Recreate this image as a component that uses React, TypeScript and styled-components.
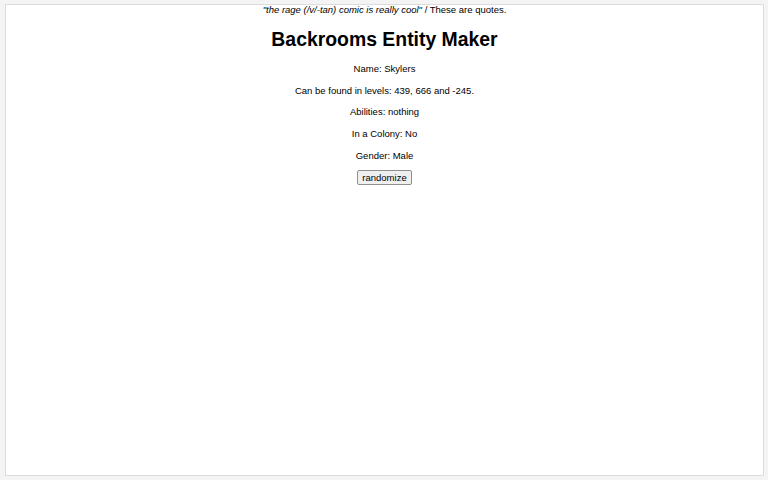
import React, { useState } from "react";
import styled, { createGlobalStyle } from "styled-components";

const GlobalStyle = createGlobalStyle`
  html, body {
    margin: 0;
    padding: 0;
    background: #f4f4f4;
  }
  body {
    font-family: "Liberation Sans", Arial, sans-serif;
    color: #000;
  }
`;

const Frame = styled.div`
  padding: 4px 4px 4px 5px;
  height: 480px;
  box-sizing: border-box;
`;

const Sheet = styled.main`
  height: 100%;
  box-sizing: border-box;
  background: #fff;
  border: 1px solid #dcdcdc;
  text-align: center;
  font-size: 9.5px;
`;

const Quote = styled.div`
  line-height: 10px;
  em {
    font-style: italic;
  }
`;

const Title = styled.h1`
  font-size: 19.4px;
  font-weight: bold;
  margin: 13px 0 12px;
`;

const Line = styled.p`
  margin: 10px 0;
  line-height: 11.7px;
`;

const RandomButton = styled.button`
  display: inline-block;
  margin-top: -2px;
  font-family: "Liberation Sans", Arial, sans-serif;
  font-size: 9.5px;
  padding: 1px 4px;
  background: #efefef;
  border: 1px solid #8f8f8f;
  border-radius: 2px;
  color: #000;
`;

const names = ["Skylers", "Hounds", "Smilers", "Facelings", "Wretches"];
const abilities = ["nothing", "teleporting", "mimicry", "speed"];

const pick = <T,>(list: T[]) => list[Math.floor(Math.random() * list.length)];

const App: React.FC = () => {
  const [entity, setEntity] = useState({
    name: "Skylers",
    levels: "439, 666 and -245.",
    ability: "nothing",
    colony: "No",
    gender: "Male",
  });

  const randomize = () => {
    const lvl = () => Math.floor(Math.random() * 1000) - 300;
    setEntity({
      name: pick(names),
      levels: `${lvl()}, ${lvl()} and ${lvl()}.`,
      ability: pick(abilities),
      colony: pick(["Yes", "No"]),
      gender: pick(["Male", "Female"]),
    });
  };

  return (
    <>
      <GlobalStyle />
      <Frame>
        <Sheet>
          <Quote>
            <em>"the rage (/v/-tan) comic is really cool"</em> / These are quotes.
          </Quote>
          <Title>Backrooms Entity Maker</Title>
          <Line>Name: {entity.name}</Line>
          <Line>Can be found in levels: {entity.levels}</Line>
          <Line>Abilities: {entity.ability}</Line>
          <Line>In a Colony: {entity.colony}</Line>
          <Line>Gender: {entity.gender}</Line>
          <RandomButton onClick={randomize}>randomize</RandomButton>
        </Sheet>
      </Frame>
    </>
  );
};

export default App;
